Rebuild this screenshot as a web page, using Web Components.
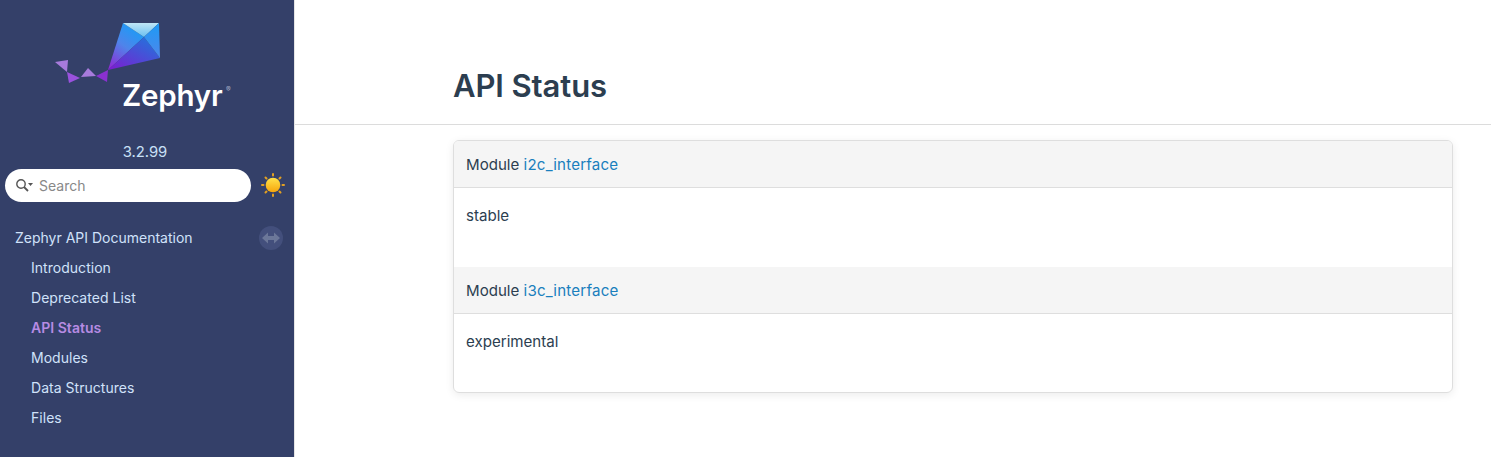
<!doctype html>
<html><head><meta charset="utf-8"><style>
html,body{margin:0;height:100%;overflow:hidden;background:#fff;font-family:Inter,"Liberation Sans",sans-serif}
body{display:flex}
</style></head><body>
<zd-sidebar>
  <zd-logo></zd-logo>
  <div slot="version">3.2.99</div>
  <zd-search slot="search"></zd-search>
  <zd-nav slot="nav"></zd-nav>
</zd-sidebar>
<zd-main title-text="API Status">
  <zd-card>
    <zd-section name="i2c_interface" status="stable"></zd-section>
    <zd-section name="i3c_interface" status="experimental" last></zd-section>
  </zd-card>
</zd-main>
<script>
function def(name,html){customElements.define(name,class extends HTMLElement{connectedCallback(){if(this.shadowRoot)return;const s=this.attachShadow({mode:'open'});s.innerHTML=typeof html==='function'?html(this):html;}})}
def('zd-sidebar',`<style>
:host{display:flex;flex-direction:column;width:294px;height:457px;flex:none;background:#344069;border-right:1px solid #e5e5e5;overflow:hidden}
.v{display:block;text-align:center;color:#c9e0f7;font-size:14.800px;line-height:18px;margin-top:13px;height:18px;padding-right:4px}
</style><slot></slot><div class="v"><slot name="version"></slot></div><slot name="search"></slot><slot name="nav"></slot>`);
def('zd-logo',`<style>
:host{display:block;height:130px;position:relative}
svg{display:block}
.t{position:absolute;left:122px;top:77px;font:600 29.500px/36px Inter,sans-serif;color:#fff;letter-spacing:-.2px}
.r{position:absolute;left:226px;top:86px;font:400 7px/7px Inter,sans-serif;color:#aab2c6}
</style>
<svg width="294" height="130" viewBox="0 0 294 130">
<defs><linearGradient id="a" x1="0.75" y1="0" x2="0.2" y2="1"><stop offset="0" stop-color="#149ff8"/><stop offset=".5" stop-color="#4f84ea"/><stop offset="1" stop-color="#8c2ed6"/></linearGradient>
<linearGradient id="b" x1="0.9" y1="0.1" x2="0.1" y2="1"><stop offset="0" stop-color="#2472dc"/><stop offset="1" stop-color="#7a1fd0"/></linearGradient>
<linearGradient id="c" gradientUnits="userSpaceOnUse" x1="141" y1="23" x2="141" y2="38"><stop offset="0" stop-color="#bfe6f6"/><stop offset="1" stop-color="#63bdf0"/></linearGradient>
<linearGradient id="d" x1="0.5" y1="0" x2="0.5" y2="1"><stop offset="0" stop-color="#1d9bf6"/><stop offset="1" stop-color="#4f86ea"/></linearGradient></defs>
<path d="M123 23 144 37 108 70Z" fill="url(#a)"/>
<path d="M144 37 160 58 108 70Z" fill="url(#b)"/>
<path d="M123 23H159L144 37Z" fill="url(#c)"/>
<path d="M159 23 160 58 144 37Z" fill="url(#d)"/>
<path d="M55 62 68 60 67 72Z" fill="#a77bdc"/>
<path d="M67 72 80 78 69 83Z" fill="#9a52de"/>
<path d="M81 77 88 68 96 76Z" fill="#a77bdc"/>
<path d="M96 76 108 70 107 82Z" fill="#8a30d0"/>
</svg><span class="t">Zephyr</span><span class="r">®</span>`);
def('zd-search',`<style>
:host{display:flex;align-items:center;height:34px;margin-top:7px;padding-left:5px;gap:10px}
.box{width:246px;height:33px;box-sizing:border-box;background:#fff;border-radius:17px;display:flex;align-items:center;padding-left:10px;color:#888;font-size:14px}
.box svg{margin-right:5px;flex:none}
</style><div class="box"><svg width="19" height="14" viewBox="0 0 19 14"><circle cx="6" cy="6" r="4.200" fill="none" stroke="#555" stroke-width="1.400"/><path d="M9 9l4 4" stroke="#555" stroke-width="1.800"/><path d="M13 5h5l-2.500 3z" fill="#555"/></svg>Search</div>
<svg width="24" height="24" viewBox="0 0 24 24"><g stroke="#e3a021" stroke-width="2" stroke-linecap="round"><path d="M12 1v1.500M12 21.500v1.500M1 12h1.500M21.500 12h1.500M4.500 4.500l1 1M18.500 18.500l1 1M19.500 4.500l-1 1M5.500 18.500l-1 1"/></g><defs><linearGradient id="s" x1="0" y1="0" x2="0" y2="1"><stop offset="0" stop-color="#ffe24a"/><stop offset="1" stop-color="#f6a50c"/></linearGradient></defs><circle cx="12" cy="12" r="7.300" fill="url(#s)"/></svg>`);
def('zd-nav',`<style>
:host{display:block;margin-top:21px;position:relative;font-size:14px;line-height:30px;color:#d0e2fa}
div{height:30px;padding-left:31px;white-space:nowrap;letter-spacing:.03px}
.top{padding-left:15px;letter-spacing:0}
.on{color:#b78be3;font-weight:600}
.sync{position:absolute;left:259px;top:3px;width:24px;height:24px;border-radius:50%;background:#434f7c;display:flex;align-items:center;justify-content:center}
</style><div class="top">Zephyr API Documentation</div><div>Introduction</div><div>Deprecated List</div><div class="on">API Status</div><div>Modules</div><div>Data Structures</div><div>Files</div>
<span class="sync"><svg width="20" height="12" viewBox="0 0 20 12"><path d="M1 6 7 .5V4h6V.5L19 6l-6 5.500V8H7v3.500z" fill="#6b7799"/></svg></span>`);
def('zd-main',h=>`<style>
:host{display:block;flex:1;min-width:0}
header{height:124px;border-bottom:1px solid #dcdcdc;padding-left:158px;display:flex}
h1{margin:66px 0 0;font:600 31px/40px Inter,sans-serif;color:#2c3e50;letter-spacing:-.1px}
.c{padding:15px 38px 0 158px}
</style><header><h1>${h.getAttribute('title-text')}</h1></header><div class="c"><slot></slot></div>`);
def('zd-card',`<style>
:host{display:block;border:1px solid #dedede;border-radius:6px;overflow:hidden;box-shadow:0 2px 8px rgba(0,0,0,.08)}
</style><slot></slot>`);
def('zd-section',h=>`<style>
:host{display:block;font-size:15.100px;color:#2c3e50}
.h{height:46px;line-height:47px;padding-left:12px;background:#f5f5f5;border-bottom:1px solid #dedede}
a{color:#1a7fbd;text-decoration:none;letter-spacing:.2px}
.b{height:${h.hasAttribute('last')?78:79}px;line-height:55px;padding-left:12px}
</style><div class="h">Module <a href="#">${h.getAttribute('name')}</a></div><div class="b">${h.getAttribute('status')}</div>`);
</script>
</body></html>
